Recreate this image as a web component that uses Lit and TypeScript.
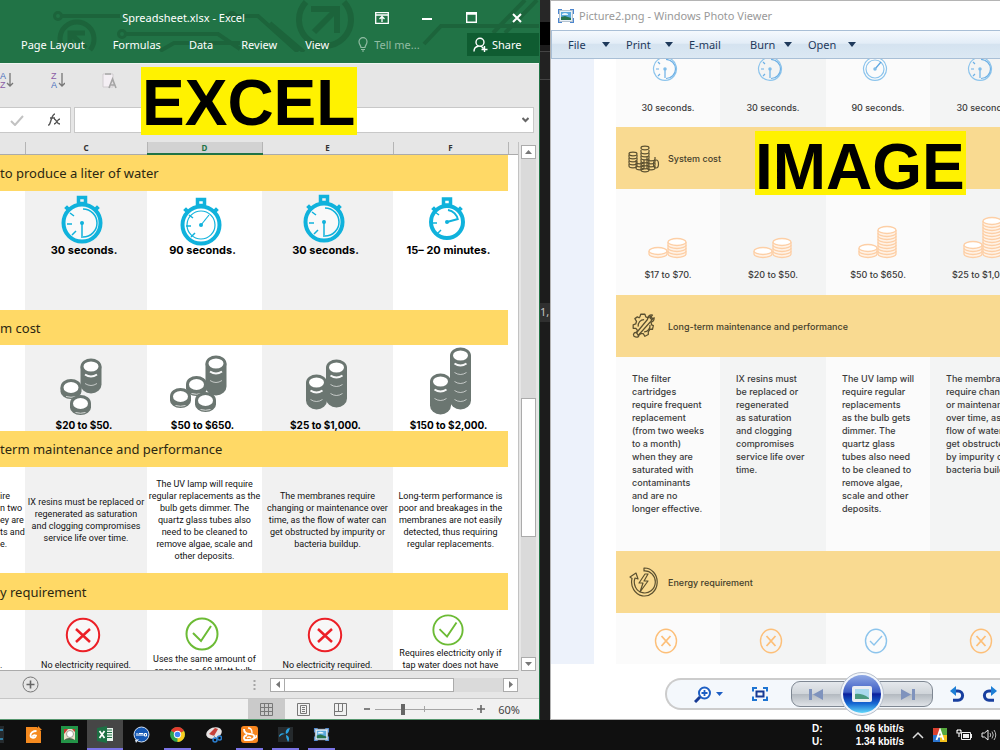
import { LitElement, html, svg, css } from "lit";
import { customElement } from "lit/decorators.js";

const lines = (items: string[]) => items.map((t, i) => (i ? html`<br />${t}` : t));

/* ---------- spreadsheet drawings ---------- */

const watch = (cy: number, r: number, kind: "half" | "full" | "quarter") => {
  const c = 22;
  const top = cy - r;
  return html`<svg class="watch" viewBox="2 0 44 53" aria-hidden="true">
    <g fill="none" stroke="#10b2dc">
      <rect x="18.5" y=${top - 5} width="7" height="6" stroke-width="3.500"></rect>
      <circle cx=${c} cy=${cy} r=${r - 2} stroke-width="4" fill="#fff" fill-opacity=".6"></circle>
      <path d="M${c - r * 0.8} ${cy - r * 0.8}l3 3M${c + r * 0.8} ${cy - r * 0.8}l-3 3" stroke-width="4"></path>
      <path d="M${c - 12} ${cy - 10}l4 3M${c - 15} ${cy + 1}h5M${c - 10} ${cy + 12}l4 -4" stroke-width="1.5"></path>
      ${kind === "half"
        ? svg`<path d="M${c + 1} ${cy - 14}a14 14 0 0 1 0 28M${c} ${cy}v15" stroke-width="1.5"></path>`
        : kind === "full"
          ? svg`<circle cx=${c} cy=${cy} r="14" stroke-width="1.2"></circle><path d="M${c} ${cy}l8 -10" stroke-width="1.2"></path>`
          : svg`<path d="M${c + 1} ${cy - 12}a12 12 0 0 1 10 10M${c} ${cy}l11 -3" stroke-width="2"></path>`}
      <circle cx=${c} cy=${cy} r="2" fill="#10b2dc" stroke="none"></circle>
    </g>
  </svg>`;
};

const coin = (x: number, y: number) => svg`
  <path d="M${x - 10.5} ${y}v4a10.5 7.5 0 0 0 21 0v-4z" fill="#6b7671"></path>
  <ellipse cx=${x} cy=${y} rx="9" ry="7" fill="#fff" stroke="#6b7671" stroke-width="3"></ellipse>
  <path d="M${x - 5} ${y + 9}q5 1.500 10 0" fill="none" stroke="#d5d8d6"></path>`;

const pile = (x: number, top: number, bottom: number) => {
  const marks: number[] = [];
  for (let y = top + 17; y < bottom - 6; y += 9) marks.push(y);
  return svg`
    <path d="M${x - 10.5} ${top + 8}V${bottom - 9}a10.5 9 0 0 0 21 0V${top + 8}z" fill="#6b7671"></path>
    <ellipse cx=${x} cy=${top + 8} rx="9" ry="6.500" fill="#fff" stroke="#6b7671" stroke-width="3"></ellipse>
    ${marks.map(
      (y, i) => svg`<path d="M${x - 6} ${y - 1}q6 4 12 0" fill="none" stroke="#fff" stroke-width=${i ? 1 : 2} opacity=${i ? 0.6 : 0.95}></path>`
    )}`;
};

const coinArt = (body: unknown) => html`<svg class="coins" viewBox="0 0 72 73" aria-hidden="true">${body}</svg>`;

const mark = (ok: boolean, size: string) => html`<svg class="mark ${size}" viewBox="0 0 36 36" aria-hidden="true">
  <g fill="none" stroke=${ok ? "#6cbb35" : "#ec2027"} stroke-width="2">
    <circle cx="18" cy="18" r=${ok ? 15.5 : 16.2} fill="#fff" fill-opacity=".5"></circle>
    ${ok
      ? svg`<path d="M9 17l8 8L27 10" stroke-width="2"></path>`
      : svg`<path d="M11 12l14 13M25 12L11 25" stroke-width="2.500"></path>`}
  </g>
</svg>`;

/* ---------- infographic drawings ---------- */

const dial = (full: boolean) => html`<svg class="dial" viewBox="0 0 26 28" aria-hidden="true">
  <g fill="none" stroke="#8cc4ec" stroke-width="1.200">
    <path d="M8 5.500A11.500 11.500 0 1 0 18 5.500"></path>
    ${full
      ? svg`<circle cx="13" cy="16" r="9"></circle><path d="M13 16l6-7" stroke="#5aa4e0"></path>`
      : svg`<path d="M14 6.500a9.500 9.500 0 0 1 0 19M13 16v9M4 16h3M6 9l2 2M6 23l2-2" stroke="#6cb0e6"></path>`}
    <circle cx="13" cy="16" r="1.200" fill="#5aa4e0"></circle>
  </g>
</svg>`;

const thinPile = (x: number, n: number) => {
  const out: unknown[] = [];
  for (let i = 0; i < n; i++) {
    const y = 43 - i * 3;
    out.push(svg`<path d="M${x - 9} ${y - 3}v3a9 3.500 0 0 0 18 0v-3" fill="#fff3e8"></path>`);
  }
  out.push(svg`<ellipse cx=${x} cy=${43 - n * 3} rx="9" ry="3.500" fill="#fff"></ellipse>`);
  return out;
};

const thinCoins = (a: number, b: number) => html`<svg class="thin" viewBox="0 0 40 48" aria-hidden="true">
  <g stroke="#fdcfa6" stroke-width="1.300">${thinPile(10, a)}${thinPile(29, b)}</g>
</svg>`;

const thinMark = (ok: boolean) => html`<svg class="thinmark" viewBox="0 0 26 28" aria-hidden="true">
  <g fill="none" stroke=${ok ? "#8cc4ec" : "#fdbf78"} stroke-width="1.400">
    <ellipse cx="13" cy="14" rx="10.500" ry="11.700"></ellipse>
    ${ok ? svg`<path d="M7 14l4 4 8-9"></path>` : svg`<path d="M8.500 9l9 10M17.500 9l-9 10" stroke-width="1.800"></path>`}
  </g>
</svg>`;

const discs = (x: number, y: number, n: number) =>
  Array.from({ length: n }, (_, i) => svg`<path d="M${x} ${y - i * 3}v-2M${x + 8} ${y - i * 3}v-2M${x} ${y - i * 3}a4 1.800 0 0 0 8 0"></path>`);

const costIcon = html`<svg class="headicon" viewBox="0 0 32 30" aria-hidden="true">
  <g fill="none" stroke="#5b5030" stroke-width="1.200">
    ${discs(1, 23, 4)}<ellipse cx="5" cy="11" rx="4" ry="1.800"></ellipse>
    ${discs(8, 25, 3)}${discs(13, 27, 7)}<ellipse cx="17" cy="5" rx="4" ry="1.800"></ellipse>
    ${discs(19, 25, 4)}<ellipse cx="28" cy="21" rx="2.500" ry="4"></ellipse>
  </g>
</svg>`;

const gearIcon = html`<svg class="headicon" viewBox="0 0 32 30" aria-hidden="true">
  <g transform="translate(3.500 1.500) scale(.84 .88)" fill="none" stroke="#5b5030" stroke-width="1.500" stroke-linejoin="round">
    <path d="M10 5l1-3h5l1 3 3 1 3-2 2 3-2 3 1 4 2 1-1 4-3 0-2 3 0 3-4 2-2-3-3 0-3 2-2-3 1-3-2-2-3 0 0-4 3-1 1-3-2-3 3-2 2 1z"></path>
    <path d="M3 27c-2-3 1-5 3-4L19 8c0-4 3-6 6-5l-3 3 2 2 3-2c0 4-2 5-5 5L9 25c0 3-3 4-6 2z"></path>
    <path d="M8 16a7 7 0 0 1 7-8M22 14a7 7 0 0 1-7 8"></path>
  </g>
</svg>`;

const energyIcon = html`<svg class="headicon" viewBox="0 0 32 30" aria-hidden="true">
  <g fill="none" stroke="#5b5030" stroke-width="1.200" stroke-linejoin="round">
    <path d="M16 1v3a10.500 11 0 1 1-9 7l3 1-2-6-6 4 2 1.500A12.800 14 0 1 0 16 1z"></path>
    <path d="M17 7l-6 9h4l-3 9 8-11h-4l4-7z"></path>
  </g>
</svg>`;

const photoIcon = html`<svg class="i18" viewBox="0 0 18 16" aria-hidden="true">
  <path d="M1 1h4v2H3v3H1zM17 1h-4v2h2v3h2zM1 15h4v-2H3v-3H1zM17 15h-4v-2h2v-3h2z" fill="#4c86cf"></path>
  <rect x="2.500" y="2.500" width="13" height="11" fill="#e9f1f8" stroke="#b4c3d0"></rect>
  <rect x="4" y="4" width="10" height="8" fill="#5ba9dd"></rect>
  <path d="M4 12V9l4-1 6 2v2z" fill="#28734d"></path><path d="M5 6q3-2 6 0v1H5z" fill="#e8f5fb"></path>
</svg>`;

const base = css`
  * { box-sizing: border-box; }
  button { font: inherit; color: inherit; background: none; border: 0; padding: 0; margin: 0; }
  a { color: inherit; text-decoration: none; }
  svg { display: block; flex: none; }
  table { border-collapse: collapse; table-layout: fixed; }
  td, th { padding: 0; font-weight: inherit; }
`;

@customElement("excel-window")
export class ExcelWindow extends LitElement {
  static styles = [
    base,
    css`
      :host { display: flex; flex-direction: column; position: relative; min-width: 0; min-height: 0; overflow: hidden;
        background: #e6e6e6; border-right: 1px solid #217346; border-bottom: 1px solid #57976f;
        font-family: "Noto Sans", sans-serif; font-size: 11px; color: #444; }
      .head { position: relative; background: #217346; color: #fff; height: 63px; flex: none; }
      .circuit { position: absolute; left: 0; top: 0; }
      .title { position: relative; display: flex; align-items: center; height: 33px; padding-top: 2px; }
      .name { flex: 1; text-align: center; padding-left: 8px; }
      .win { width: 45px; height: 30px; display: grid; place-items: center; }
      .tabs { position: relative; display: flex; align-items: center; gap: 28px; height: 23px; padding-left: 21px; white-space: nowrap; font-size: 11px; }
      .tell { display: flex; align-items: center; gap: 5px; flex: 1; min-width: 0; }
      .tell input { width: 60px; background: none; border: 0; padding: 0; font: inherit; color: #fff; outline: 0; }
      .tell input::placeholder { color: #91bca3; opacity: 1; }
      .share { display: flex; align-items: center; gap: 4px; width: 72px; height: 23px; padding-left: 6px; background: #0f5c31; }
      .tools { display: flex; align-items: flex-start; gap: 37px; height: 44px; padding-top: 8px; flex: none; border-top: 1px solid #f0f5f1; }
      .glyph { font: 9px "Liberation Sans", sans-serif; }
      .formula { display: flex; gap: 3px; height: 26px; padding-right: 5px; flex: none; }
      .fx { width: 71px; border: 1px solid #c8c8c8; border-left: 0; background: #fff; display: flex; align-items: center; padding-left: 10px; gap: 24px; }
      .bar { flex: 1; display: flex; align-items: center; background: #fff; border: 1px solid #c8c8c8; padding-right: 4px; }
      .bar input { flex: 1; min-width: 0; border: 0; outline: 0; background: none; }
      .body { flex: 1; min-height: 0; display: flex; margin-top: 9px; }
      .sheet { flex: 1; min-width: 0; overflow: hidden; border-bottom: 1px solid #ababab; }
      .grid { width: 100%; background: #fff; color: #111; }
      .cc { width: 122px; } .cd, .cf { width: 115px; } .ce { width: 131px; } .cz { width: 10px; }
      .cb { width: auto; }
      .cols th { height: 12px; background: #e6e6e6; font: 700 8px/10px "Noto Sans", sans-serif; color: #333;
        border-right: 1px solid #b5b5b5; border-bottom: 1px solid #ababab; }
      .cols .on { background: #d2d2d2; color: #217346; border-bottom: 2px solid #217346; }
      .cols .end { border-right: 0; }
      .band th { background: #ffd966; text-align: left; font-size: 13px; line-height: 18px; color: #2b2712; white-space: nowrap; }
      .band td { background: #fff; }
      .h37 { height: 37px; } .h36 { height: 36px; } .h35 { height: 35px; } .h119 { height: 119px; } .h86 { height: 86px; } .h106 { height: 106px; }
      .data td { text-align: center; vertical-align: top; font: 9px/12px Roboto, sans-serif; white-space: nowrap; }
      .data .gray { background: #f1f1f1; }
      .data .edge { text-align: left; overflow: hidden; }
      .words td { vertical-align: middle; }
      .art td { padding-right: 4px; }
      .strong td { font: 700 11px/12px Inter, sans-serif; color: #000; }
      .price td { font-size: 10px; }
      .watch { width: 44px; height: 53px; margin: 0 auto; overflow: visible; }
      .coins { width: 72px; height: 74px; margin: 0 auto; }
      .mark { width: 42px; margin: 0 auto; }
      .low { height: 49px; padding: 7px 6px 6px 0; } .mid { height: 43px; padding: 6px 6px 1px 0; } .high { height: 37px; padding: 3px 6px 0 0; }
      .dot { padding-top: 49px; }
      .vscroll { width: 21px; padding: 3px 3px 0 2px; border-left: 1px solid #c2c2c2; display: flex; flex-direction: column; }
      .arrow { display: grid; place-items: center; width: 15px; height: 14px; border: 1px solid #ababab; background: #fff; flex: none; }
      .track { flex: 1; background: #dadada; display: flex; flex-direction: column; padding-top: 239px; }
      .thumb { height: 139px; background: #fff; border: 1px solid #ababab; }
      .sheets { display: flex; align-items: center; height: 27px; padding: 0 21px 0 22px; flex: none; }
      .sheets .dots { margin-left: auto; margin-right: 14px; }
      .htrack { width: 218px; height: 14px; background: #dadada; display: flex; }
      .hthumb { width: 169px; background: #fff; border: 1px solid #ababab; border-left: 0; }
      .status { display: flex; align-items: center; justify-content: flex-end; height: 21px; padding-right: 19px; background: #f1f1f1; border-top: 1px solid #c6c6c6; flex: none; }
      .view { width: 37px; height: 20px; display: grid; place-items: center; }
      .sel { background: #cacaca; }
      .sign { width: 8px; margin: 0 4px; }
      .zoom { appearance: none; width: 98px; height: 12px; margin: 0; background: linear-gradient(#a5a5a5, #a5a5a5) center / 100% 1px no-repeat, linear-gradient(#a5a5a5, #a5a5a5) 50% 50% / 1px 6px no-repeat; }
      .zoom::-webkit-slider-thumb { appearance: none; width: 4px; height: 11px; background: #666; }
      .pct { width: 31px; text-align: right; }
    `,
  ];

  render() {
    return html`
      <div class="head">
        <svg class="circuit" width="539" height="52" viewBox="0 0 539 52" aria-hidden="true">
          <g fill="none" stroke="#1c643b" stroke-width="4">
            <circle cx="58" cy="16" r="3.500" stroke-width="3"></circle><path d="M62 16h58M225 16h33l40 36M270 23l34 29"></path>
            <circle cx="122" cy="34" r="3.500" stroke-width="3"></circle><path d="M126 34h92l22 15M160 51l14-8h66"></path>
            <circle cx="232" cy="16" r="3.500" stroke-width="3"></circle>
            <path d="M64 50a17 17 0 1 1 26 0" stroke-width="5"></path>
            <path d="M86 48L72 35M70 50V33h15" stroke-width="5"></path>
            <path d="M306 2a26 26 0 1 0 38 0" stroke-width="6"></path>
            <path d="M314 32l22-22M311 9h26v24" stroke-width="6"></path>
            <path d="M424 44l17-18h98M493 33l32-33M505 33l32-33"></path>
          </g>
        </svg>
        <div class="title">
          <div class="name">Spreadsheet.xlsx - Excel</div>
          <button class="win" aria-label="Ribbon display options"><svg width="14" height="12" viewBox="0 0 14 12"><path d="M.7.7h12.600v10.600H.7zM.7 3h12.600M7 10V5M4.500 7L7 4.500 9.500 7" fill="none" stroke="#fff" stroke-width="1.300"></path></svg></button>
          <button class="win" aria-label="Minimize"><svg width="10" height="10"><path d="M0 6h10" stroke="#fff" stroke-width="2"></path></svg></button>
          <button class="win" aria-label="Maximize"><svg width="11" height="11"><path d="M.7.7h9.600v9.600H.7zM0 2h11" fill="none" stroke="#fff" stroke-width="1.400"></path></svg></button>
          <button class="win" aria-label="Close"><svg width="10" height="10"><path d="M1 1l8 8M9 1L1 9" stroke="#fff" stroke-width="2"></path></svg></button>
        </div>
        <nav class="tabs">
          <a href="#layout">Page Layout</a><a href="#formulas">Formulas</a><a href="#data">Data</a><a href="#review">Review</a><a href="#view">View</a>
          <label class="tell"><svg width="12" height="15" viewBox="-1 0 12 15"><path d="M3 10.500C3 8.500 1 7.500 1 4.700a4 4 0 0 1 8 0C9 7.500 7 8.500 7 10.500zM3 12.500h4M4 14h2" fill="none" stroke="#91bca3" stroke-width="1.200"></path></svg>
            <input type="text" placeholder="Tell me..." aria-label="Tell me what you want to do" /></label>
          <button class="share"><svg width="15" height="16" viewBox="0 0 15 16"><path d="M1 14.500c0-3 2-5 4.500-5.200M7 1.200a4 4 0 1 1 0 8 4 4 0 0 1 0-8zM8 9l2.500 2.500M11.500 9v6M8.500 12.500h6" fill="none" stroke="#fff" stroke-width="1.400"></path></svg>Share</button>
        </nav>
      </div>
      <div class="tools">
        <button aria-label="Sort A to Z"><svg width="14" height="18" viewBox="0 0 14 18"><text class="glyph" x="0" y="7" fill="#4a6fbd">A</text><text class="glyph" x="0" y="16" fill="#8b5ba5">Z</text><path d="M10 1v12M7 11l3 3 3-3" fill="none" stroke="#777" stroke-width="1.300"></path></svg></button>
        <button aria-label="Sort Z to A"><svg width="14" height="18" viewBox="0 0 14 18"><text class="glyph" x="0" y="7" fill="#8b5ba5">Z</text><text class="glyph" x="0" y="16" fill="#4a6fbd">A</text><path d="M11 1v12M8 11l3 3 3-3" fill="none" stroke="#777" stroke-width="1.300"></path></svg></button>
        <button aria-label="Paste values"><svg width="16" height="17" viewBox="0 0 16 17"><path d="M1 2h10v13H1z" fill="#f4eff4" stroke="#d0cccf"></path><path d="M3 3V1h6v2z" fill="#b5b5b5"></path><path d="M7 16l3.500-9L14 16M8 13h5" fill="none" stroke="#a5a5a5" stroke-width="1.600"></path></svg></button>
      </div>
      <div class="formula">
        <div class="fx">
          <svg width="14" height="11" viewBox="0 0 14 11"><path d="M1 6l4 4 8-9" fill="none" stroke="#c2c2c2" stroke-width="2"></path></svg>
          <svg width="13" height="14" viewBox="0 0 13 14"><path d="M0 12c3 1 3-11 7-11M2 5h5M6 6c3 0 2 5 6 5M12 6c-3 0-3 5-6 5" fill="none" stroke="#555" stroke-width="1.400"></path></svg>
        </div>
        <div class="bar"><input type="text" aria-label="Formula" /><svg width="7" height="6" viewBox="0 0 7 6"><path d="M.5 1l3 3 3-3" fill="none" stroke="#666" stroke-width="2"></path></svg></div>
      </div>
      <div class="body">
        <div class="sheet">
          <table class="grid">
            <colgroup><col class="cb" /><col class="cc" /><col class="cd" /><col class="ce" /><col class="cf" /><col class="cz" /></colgroup>
            <thead><tr class="cols"><th></th><th>C</th><th class="on">D</th><th>E</th><th>F</th><th class="end"></th></tr></thead>
            <tbody>
              <tr class="band h37"><th colspan="5">to produce a liter of water</th><td></td></tr>
              <tr class="data art strong h119">
                <td></td>
                <td class="gray">${watch(32, 20.5, "half")}30 seconds.</td>
                <td>${watch(34, 20.5, "full")}90 seconds.</td>
                <td class="gray">${watch(31, 20.5, "half")}30 seconds.</td>
                <td>${watch(31, 18, "quarter")}15– 20 minutes.</td><td></td>
              </tr>
              <tr class="band h35"><th colspan="5">m cost</th><td></td></tr>
              <tr class="data art strong price h86">
                <td></td>
                <td class="gray">${coinArt([pile(43, 13, 48), coin(23, 42), coin(32.5, 58)])}$20 to $50.</td>
                <td>${coinArt([pile(49, 10, 50), coin(29.5, 39), coin(13.5, 51), coin(38.5, 55)])}$50 to $650.</td>
                <td class="gray">${coinArt([pile(46.5, 14, 62), pile(26.5, 29, 64)])}$25 to $1,000.</td>
                <td>${coinArt([pile(47.5, 2, 64), pile(27.5, 28, 69)])}$150 to $2,000.</td><td></td>
              </tr>
              <tr class="band h36"><th colspan="5">term maintenance and performance</th><td></td></tr>
              <tr class="data words h106">
                <td class="edge">${lines(["ire", "n two", "ey are", "ts and", "e."])}</td>
                <td class="gray">${lines(["IX resins must be replaced or", "regenerated as saturation", "and clogging compromises", "service life over time."])}</td>
                <td>${lines(["The UV lamp will require", "regular replacements as the", "bulb gets dimmer. The", "quartz glass tubes also", "need to be cleaned to", "remove algae, scale and", "other deposits."])}</td>
                <td class="gray">${lines(["The membranes require", "changing or maintenance over", "time, as the flow of water can", "get obstructed by impurity or", "bacteria buildup."])}</td>
                <td>${lines(["Long-term performance is", "poor and breakages in the", "membranes are not easily", "detected, thus requiring", "regular replacements."])}</td><td></td>
              </tr>
              <tr class="band h37"><th colspan="5">y requirement</th><td></td></tr>
              <tr class="data h86">
                <td class="edge"><div class="dot">.</div></td>
                <td class="gray">${mark(false, "low")}No electricity required.</td>
                <td>${mark(true, "mid")}${lines(["Uses the same amount of", "energy as a 60-Watt bulb."])}</td>
                <td class="gray">${mark(false, "low")}No electricity required.</td>
                <td>${mark(true, "high")}${lines(["Requires electricity only if", "tap water does not have"])}</td><td></td>
              </tr>
            </tbody>
          </table>
        </div>
        <div class="vscroll">
          <button class="arrow" aria-label="Scroll up"><svg width="7" height="4"><path d="M0 4l3.500-4L7 4z" fill="#777"></path></svg></button>
          <div class="track"><div class="thumb"></div></div>
          <button class="arrow" aria-label="Scroll down"><svg width="7" height="4"><path d="M0 0l3.500 4L7 0z" fill="#777"></path></svg></button>
        </div>
      </div>
      <div class="sheets">
        <button aria-label="New sheet"><svg width="17" height="17" viewBox="0 0 17 17"><circle cx="8.500" cy="8.500" r="7.500" fill="none" stroke="#777"></circle><path d="M4.500 8.500h8M8.500 4.500v8" stroke="#666" stroke-width="1.600"></path></svg></button>
        <svg class="dots" width="3" height="11"><path d="M1.500 1v2M1.500 5v2M1.500 9v2" stroke="#a5a5a5" stroke-width="2"></path></svg>
        <button class="arrow" aria-label="Scroll left"><svg width="4" height="7"><path d="M4 0L0 3.500 4 7z" fill="#777"></path></svg></button>
        <div class="htrack"><div class="hthumb"></div></div>
        <button class="arrow" aria-label="Scroll right"><svg width="4" height="7"><path d="M0 0l4 3.500L0 7z" fill="#777"></path></svg></button>
      </div>
      <div class="status">
        <button class="view sel" aria-label="Normal view"><svg width="13" height="13"><path d="M.5.5h12v12H.5zM4.500 0v13M8.500 0v13M0 4.500h13M0 8.500h13" fill="none" stroke="#777"></path></svg></button>
        <button class="view" aria-label="Page layout view"><svg width="13" height="13"><path d="M.5.5h12v12H.5zM3.500 2.500h6v8h-6zM5 4.500h3M5 6.500h3M5 8.500h3" fill="none" stroke="#777"></path></svg></button>
        <button class="view" aria-label="Page break view"><svg width="13" height="13"><path d="M.5.5h12v12H.5zM4.500 0v8M8.500 0v8M0 8.500h8.500" fill="none" stroke="#777"></path></svg></button>
        <button class="sign" aria-label="Zoom out"><svg width="8" height="8"><path d="M1 4h6" stroke="#666" stroke-width="1.600"></path></svg></button>
        <input class="zoom" type="range" min="10" max="190" value="60" aria-label="Zoom" />
        <button class="sign" aria-label="Zoom in"><svg width="8" height="8"><path d="M0 4h8M4 0v8" stroke="#666" stroke-width="1.600"></path></svg></button>
        <span class="pct">60%</span>
      </div>
    `;
  }
}

@customElement("photo-window")
export class PhotoWindow extends LitElement {
  static styles = [
    base,
    css`
      :host { display: flex; flex-direction: column; min-width: 0; min-height: 0; overflow: hidden; background: #fff;
        border: solid #b4b4b4; border-width: 1px 0 1px 1px; font-family: "Noto Sans", sans-serif; font-size: 11px; }
      .title { display: flex; align-items: center; gap: 4px; height: 29px; padding-left: 6px; color: #999; flex: none; }
      .i18 { width: 18px; height: 16px; }
      .menu { display: grid; grid-template-columns: 58px 63px 61px 58px 58px; align-items: center; height: 29px; padding-left: 16px; flex: none; color: #1e395b;
        background: linear-gradient(#f5f9fd, #e3edf7 45%, #d5e3f0 50%, #dbe8f3); border: solid #a9bfd6; border-width: 1px 0 1px 1px; }
      .menu button { display: flex; align-items: center; justify-content: space-between; padding-right: 16px; text-align: left; }
      .menu button:last-child { padding-right: 10px; }
      .stage { flex: 1; min-height: 0; overflow: hidden; padding-left: 65px; display: flex;
        background: linear-gradient(90deg, #edf2fb 43px, #fff 43px); }
      .info { width: 420px; flex: none; color: #3a3a3a; font: 500 9px/13px Inter, sans-serif; align-self: flex-start; }
      .a { width: 104px; } .b { width: 106px; }
      .info td { background: #fbfbfb; vertical-align: top; white-space: nowrap; }
      .info td:nth-child(even) { background: #f3f4f4; }
      .info th { background: #f9da91; text-align: left; color: #45402c; }
      .row { display: flex; align-items: center; gap: 8px; padding-left: 12px; }
      .headicon { width: 32px; height: 30px; }
      .h68 { height: 68px; } .h62 { height: 62px; } .h106 { height: 106px; } .h194 { height: 194px; } .h52 { height: 52px; }
      .center td { text-align: center; }
      .dial { width: 26px; height: 28px; margin: -6px auto 20px; position: relative; right: 3px; }
      .thin { width: 40px; height: 48px; margin: 22px auto 9px; overflow: visible; }
      .thinmark { width: 26px; height: 28px; margin: 14px auto 0; position: relative; right: 2px; }
      .words td { padding: 15px 0 0 16px; }
      .foot { display: flex; align-items: center; height: 55px; padding: 5px 0 0 114px; flex: none; overflow: hidden; }
      .pill { flex: 1 0 400px; display: flex; align-items: center; height: 32px; padding-left: 27px; background: #f4f8fc; border: 2px solid #ccc; border-radius: 16px 0 0 16px; border-right: 0; }
      .zoomer { display: flex; align-items: center; gap: 4px; width: 58px; }
      .fit { width: 39px; }
      .step { width: 58px; height: 26px; display: grid; place-items: center; border: 1px solid #7e8792; background: linear-gradient(#e4e8ec, #d0d5da 48%, #b4bac1 52%, #dfe3e7); }
      .prev { border-radius: 9px 0 0 9px; padding-right: 8px; } .next { border-radius: 0 9px 9px 0; padding-left: 8px; }
      .show { width: 44px; height: 44px; margin: 0 -9px; position: relative; display: grid; place-items: center; border-radius: 50%; border: 1px solid #b7bfcc; background: #f2f6fb; }
      .turn { margin-left: 17px; }
    `,
  ];

  render() {
    const caret = html`<svg width="8" height="5"><path d="M0 0h8L4 5z" fill="#1e395b"></path></svg>`;
    const head = (icon: unknown, t: string) => html`<tr class="h62"><th colspan="4"><div class="row">${icon}${t}</div></th></tr>`;
    return html`
      <div class="title">${photoIcon}<span>Picture2.png - Windows Photo Viewer</span></div>
      <div class="menu">
        <button>File${caret}</button><button>Print${caret}</button><button>E-mail</button><button>Burn${caret}</button><button>Open${caret}</button>
      </div>
      <div class="stage">
        <table class="info">
          <colgroup><col class="a" /><col class="b" /><col class="a" /><col class="b" /></colgroup>
          <tbody>
            <tr class="h68 center"><td>${dial(false)}30 seconds.</td><td>${dial(false)}30 seconds.</td><td>${dial(true)}90 seconds.</td><td>${dial(false)}30 seconds.</td></tr>
            ${head(costIcon, "System cost")}
            <tr class="h106 center"><td>${thinCoins(1, 4)}$17 to $70.</td><td>${thinCoins(1, 4)}$20 to $50.</td><td>${thinCoins(2, 8)}$50 to $650.</td><td>${thinCoins(3, 11)}$25 to $1,000.</td></tr>
            ${head(gearIcon, "Long-term maintenance and performance")}
            <tr class="h194 words">
              <td>${lines(["The filter", "cartridges", "require frequent", "replacement", "(from two weeks", "to a month)", "when they are", "saturated with", "contaminants", "and are no", "longer effective."])}</td>
              <td>${lines(["IX resins must", "be replaced or", "regenerated", "as saturation", "and clogging", "compromises", "service life over", "time."])}</td>
              <td>${lines(["The UV lamp will", "require regular", "replacements", "as the bulb gets", "dimmer. The", "quartz glass", "tubes also need", "to be cleaned to", "remove algae,", "scale and other", "deposits."])}</td>
              <td>${lines(["The membranes", "require changing", "or maintenance", "over time, as the", "flow of water can", "get obstructed", "by impurity or", "bacteria buildup."])}</td>
            </tr>
            ${head(energyIcon, "Energy requirement")}
            <tr class="h52"><td>${thinMark(false)}</td><td>${thinMark(false)}</td><td>${thinMark(true)}</td><td>${thinMark(false)}</td></tr>
          </tbody>
        </table>
      </div>
      <div class="foot">
        <div class="pill">
          <button class="zoomer" aria-label="Zoom"><svg width="18" height="17" viewBox="0 0 18 17"><circle cx="10.500" cy="7" r="5.500" fill="#fff" stroke="#1d5fc4" stroke-width="2"></circle><path d="M6 11l-5 5" stroke="#173a94" stroke-width="3"></path><path d="M7.500 7h6M10.500 4v6" stroke="#1d5fc4" stroke-width="1.800"></path></svg><svg width="7" height="4"><path d="M0 0h7L3.500 4z" fill="#1d5fc4"></path></svg></button>
          <button class="fit" aria-label="Fit to window"><svg width="16" height="14" viewBox="0 0 16 14"><path d="M1 4.500V1h4M11 1h4v3.500M15 9.500V13h-4M5 13H1V9.500" fill="none" stroke="#1d74d2" stroke-width="2"></path><rect x="4.500" y="4.500" width="7" height="5" fill="none" stroke="#173a94" stroke-width="2"></rect></svg></button>
          <button class="step prev" aria-label="Previous"><svg width="14" height="11"><path d="M1.500 0v11" stroke="#7f93bd" stroke-width="3"></path><path d="M14 0v11L4 5.500z" fill="#7f93bd"></path></svg></button>
          <button class="show" aria-label="Play slide show"><svg width="38" height="38" viewBox="0 0 38 38">
            <defs><linearGradient id="orb" x2="0" y2="1"><stop offset="0" stop-color="#8fa8e4"></stop><stop offset=".45" stop-color="#3c5cc4"></stop><stop offset=".5" stop-color="#0a1f9c"></stop><stop offset=".75" stop-color="#1668d2"></stop><stop offset="1" stop-color="#62d8fa"></stop></linearGradient></defs>
            <circle cx="19" cy="19" r="19" fill="url(#orb)"></circle><rect x="9" y="11" width="20" height="16" rx="2" fill="#e9edf2"></rect><rect x="12" y="14" width="14" height="10" fill="#a9d9ee"></rect><path d="M12 24v-5q7-1 14 4v1z" fill="#4a9a80"></path></svg></button>
          <button class="step next" aria-label="Next"><svg width="14" height="11"><path d="M12.500 0v11" stroke="#7f93bd" stroke-width="3"></path><path d="M0 0v11l10-5.500z" fill="#7f93bd"></path></svg></button>
          <button class="turn" aria-label="Rotate counterclockwise"><svg width="15" height="16" viewBox="0 0 15 16"><path d="M4 5h4a4.500 4.500 0 0 1 0 9.200H3" fill="none" stroke="#183f9f" stroke-width="3"></path><path d="M6 0v10L0 5z" fill="#1d7fd6"></path></svg></button>
          <button class="turn" aria-label="Rotate clockwise"><svg width="15" height="16" viewBox="0 0 15 16"><path d="M11 5H7a4.500 4.500 0 0 0 0 9.200h5" fill="none" stroke="#183f9f" stroke-width="3"></path><path d="M9 0v10l6-5z" fill="#1d7fd6"></path></svg></button>
        </div>
      </div>
    `;
  }
}

@customElement("app-root")
export class AppRoot extends LitElement {
  static styles = [
    base,
    css`
      :host { display: flex; flex-direction: column; height: 100vh; position: relative; overflow: hidden; background: #101010; }
      .desk { flex: 1; min-height: 0; display: grid; grid-template-columns: 54fr 10px 45fr; }
      .gap { background: #1c1c1c; overflow: hidden; display: flex; flex-direction: column; font: 11px/18px "Noto Sans", sans-serif; color: #c4c4c4; }
      .g1 { height: 22px; background: #272727; } .g2 { height: 23px; background: #000; }
      .g3 { height: 29px; margin-top: 6px; border: solid #444; border-width: 1px 0; background: #222; }
      .g4 { margin-top: 223px; height: 19px; background: #303030; }
      .label { position: absolute; margin: 0; background: #fff200; color: #000; font: 700 64px/72px "Liberation Sans", sans-serif; }
      .excel { left: 141px; top: 67px; height: 68px; padding: 0 2px 0 1px; }
      .image { left: 755px; top: 131px; height: 64px; padding: 0 1px 0 0; }
      .taskbar { display: flex; height: 30px; flex: none; background: #101010; color: #fff; }
      .app { width: 36px; display: grid; place-items: center; border-bottom: 2px solid transparent; }
      .cut { width: 15px; justify-items: start; }
      .run { background: linear-gradient(#7b74e6, #7b74e6) center 28px / 27px 2px no-repeat; background-origin: border-box; background-clip: border-box; }
      .on { background: #464646; border-color: #7b74e6; }
      .app svg { width: 17px; height: 17px; }
      .cut svg { width: 4px; }
      .rates { margin-left: auto; display: grid; grid-template-columns: 24px 68px; font: 700 10px/13px "Liberation Sans", sans-serif; padding-top: 2px; align-content: start; }
      .val { text-align: right; }
      .tray { display: flex; align-items: center; gap: 9px; padding: 0 3px 0 8px; }
    `,
  ];

  render() {
    const i = (body: unknown) => html`<svg viewBox="0 0 17 17" aria-hidden="true">${body}</svg>`;
    return html`
      <main class="desk">
        <excel-window></excel-window>
        <div class="gap"><div class="g1"></div><div class="g2"></div><div class="g3"></div><div class="g4">1,</div></div>
        <photo-window></photo-window>
      </main>
      <h2 class="label excel">EXCEL</h2>
      <h2 class="label image">IMAGE</h2>
      <footer class="taskbar">
        <button class="app cut" aria-label="Pinned app"><svg viewBox="0 0 4 17"><path d="M0 0h4v17H0z" fill="#252a2d"></path><path d="M0 4h3M0 13h3" stroke="#3596c8" stroke-width="1.500"></path></svg></button>
        <button class="app" aria-label="PDF reader">${i(svg`<path d="M1 1h11l4 4v12H1z" fill="#f58a1f"></path><path d="M13 0l4 4h-4z" fill="#f58a1f"></path><path d="M11.500 5C8 5 5.500 7 5.500 9.500s4.500 3.500 5.500 0c-2-1-3 0-3.500 1" fill="none" stroke="#fff" stroke-width="1.800"></path>`)}</button>
        <button class="app" aria-label="Editor">${i(svg`<path d="M0 0h17v17H0z" fill="#239447"></path><path d="M3 3h11v11H3z" fill="#e9dfc8"></path><path d="M3 3h4l-4 5zM11 3h3v3z" fill="#c8352d"></path><circle cx="9" cy="8" r="3.500" fill="#fff" stroke="#8a8a80" stroke-width=".8"></circle><path d="M3 14q5-4 11 0z" fill="#456b4a"></path>`)}</button>
        <button class="app on" aria-label="Excel">${i(svg`<path d="M9 2h7v13H9z" fill="#e9f3ec"></path><path d="M10 4h5M10 6.500h5M10 9h5M10 11.500h5" stroke="#217346"></path><path d="M0 2l10-2v17L0 15z" fill="#1d7044"></path><path d="M2.500 5l5 7M7.500 5l-5 7" stroke="#fff" stroke-width="1.700"></path>`)}</button>
        <button class="app" aria-label="Messenger">${i(svg`<circle cx="8.500" cy="8.500" r="7.500" fill="#1458b4" stroke="#d5e2f3"></circle><path d="M2 14l4-1-3 4z" fill="#d5e2f3"></path><path d="M4 7v3M6 10V7.500l2 0V10M8 7.500h2V10M11.500 7.500h2V10h-2z" fill="none" stroke="#fff"></path>`)}</button>
        <button class="app run" aria-label="Chrome">${i(svg`<circle cx="8.500" cy="8.500" r="7.500" fill="#2fa350"></circle><path d="M8.500 8.500L2 4.700A7.500 7.500 0 0 1 15 5z" fill="#e33b2e"></path><path d="M8.500 8.500L15 5a7.500 7.500 0 0 1-6.500 11z" fill="#fbcb1e"></path><circle cx="8.500" cy="8.500" r="3.700" fill="#fff"></circle><circle cx="8.500" cy="8.500" r="2.800" fill="#4285f4"></circle>`)}</button>
        <button class="app" aria-label="Snipping tool">${i(svg`<ellipse cx="9" cy="7" rx="8" ry="5.500" fill="#e8e4e4" transform="rotate(-20 9 7)"></ellipse><path d="M4 8l6-6 3 1-4 7z" fill="#c8423a"></path><path d="M8 9l4 4" stroke="#999"></path><circle cx="10" cy="14" r="2" fill="none" stroke="#2b7fd0" stroke-width="1.500"></circle><circle cx="14.500" cy="12" r="2" fill="none" stroke="#2b7fd0" stroke-width="1.500"></circle>`)}</button>
        <button class="app run" aria-label="Browser">${i(svg`<rect width="17" height="17" rx="3" fill="#f7861f"></rect><path d="M3 3c0 4 3 5 6 5 4 0 5 2 4 4s-3 2-5 2H4c-2-2-1-4 2-5" fill="none" stroke="#fff" stroke-width="1.900"></path><path d="M7 2c3 0 4 2 4 5M15 9c1 2 0 3-2 3M6 12q2-2 4 0" fill="none" stroke="#fff" stroke-width="1.400"></path>`)}</button>
        <button class="app run" aria-label="Telenor">${i(svg`<path d="M1 1h15v15H1z" fill="#252a2d"></path><path d="M8 8C5 6 2 8 2 11c2-2 4-3 6-3zM9 8c-1-3 1-6 4-6-1 2-1 5-4 6zM9 9c3 1 4 4 2 7-1-3-2-4-2-7z" fill="#2aa5e4"></path>`)}</button>
        <button class="app run" aria-label="Photo Viewer">${photoIcon}</button>
        <div class="rates"><span>D:</span><span class="val">0.96 kbit/s</span><span>U:</span><span class="val">1.34 kbit/s</span></div>
        <div class="tray">
          <svg width="12" height="8"><path d="M1 7l5-5 5 5" fill="none" stroke="#ddd" stroke-width="1.500"></path></svg>
          <svg width="14" height="14" viewBox="0 0 14 14"><path d="M0 0h7v7H0z" fill="#d9402f"></path><path d="M7 0h7v7H7z" fill="#55a83c"></path><path d="M0 7h7v7H0z" fill="#2b75cf"></path><path d="M7 7h7v7H7z" fill="#f4c21c"></path><path d="M3.500 12L7 2l3.500 10M5 8.500h4" fill="none" stroke="#fff" stroke-width="1.800"></path></svg>
          <svg width="16" height="12" viewBox="0 0 16 12"><path d="M5.500 3.500h9v7h-9z" fill="none" stroke="#eee"></path><path d="M7 5h6v4H7zM15 5h1v4h-1z" fill="#eee"></path><path d="M1 1v3h4V1M3 4v4M2 0v2M4 0v2" fill="none" stroke="#eee" stroke-width="1.200"></path></svg>
          <svg width="16" height="12" viewBox="0 0 16 12"><path d="M1 4h2.500L7 1v10L3.500 8H1z" fill="none" stroke="#eee"></path><path d="M9 4q1.500 2 0 4M11 2.500q2.500 3.500 0 7M13 1q3.500 5 0 10" fill="none" stroke="#bbb"></path></svg>
        </div>
      </footer>
    `;
  }
}
